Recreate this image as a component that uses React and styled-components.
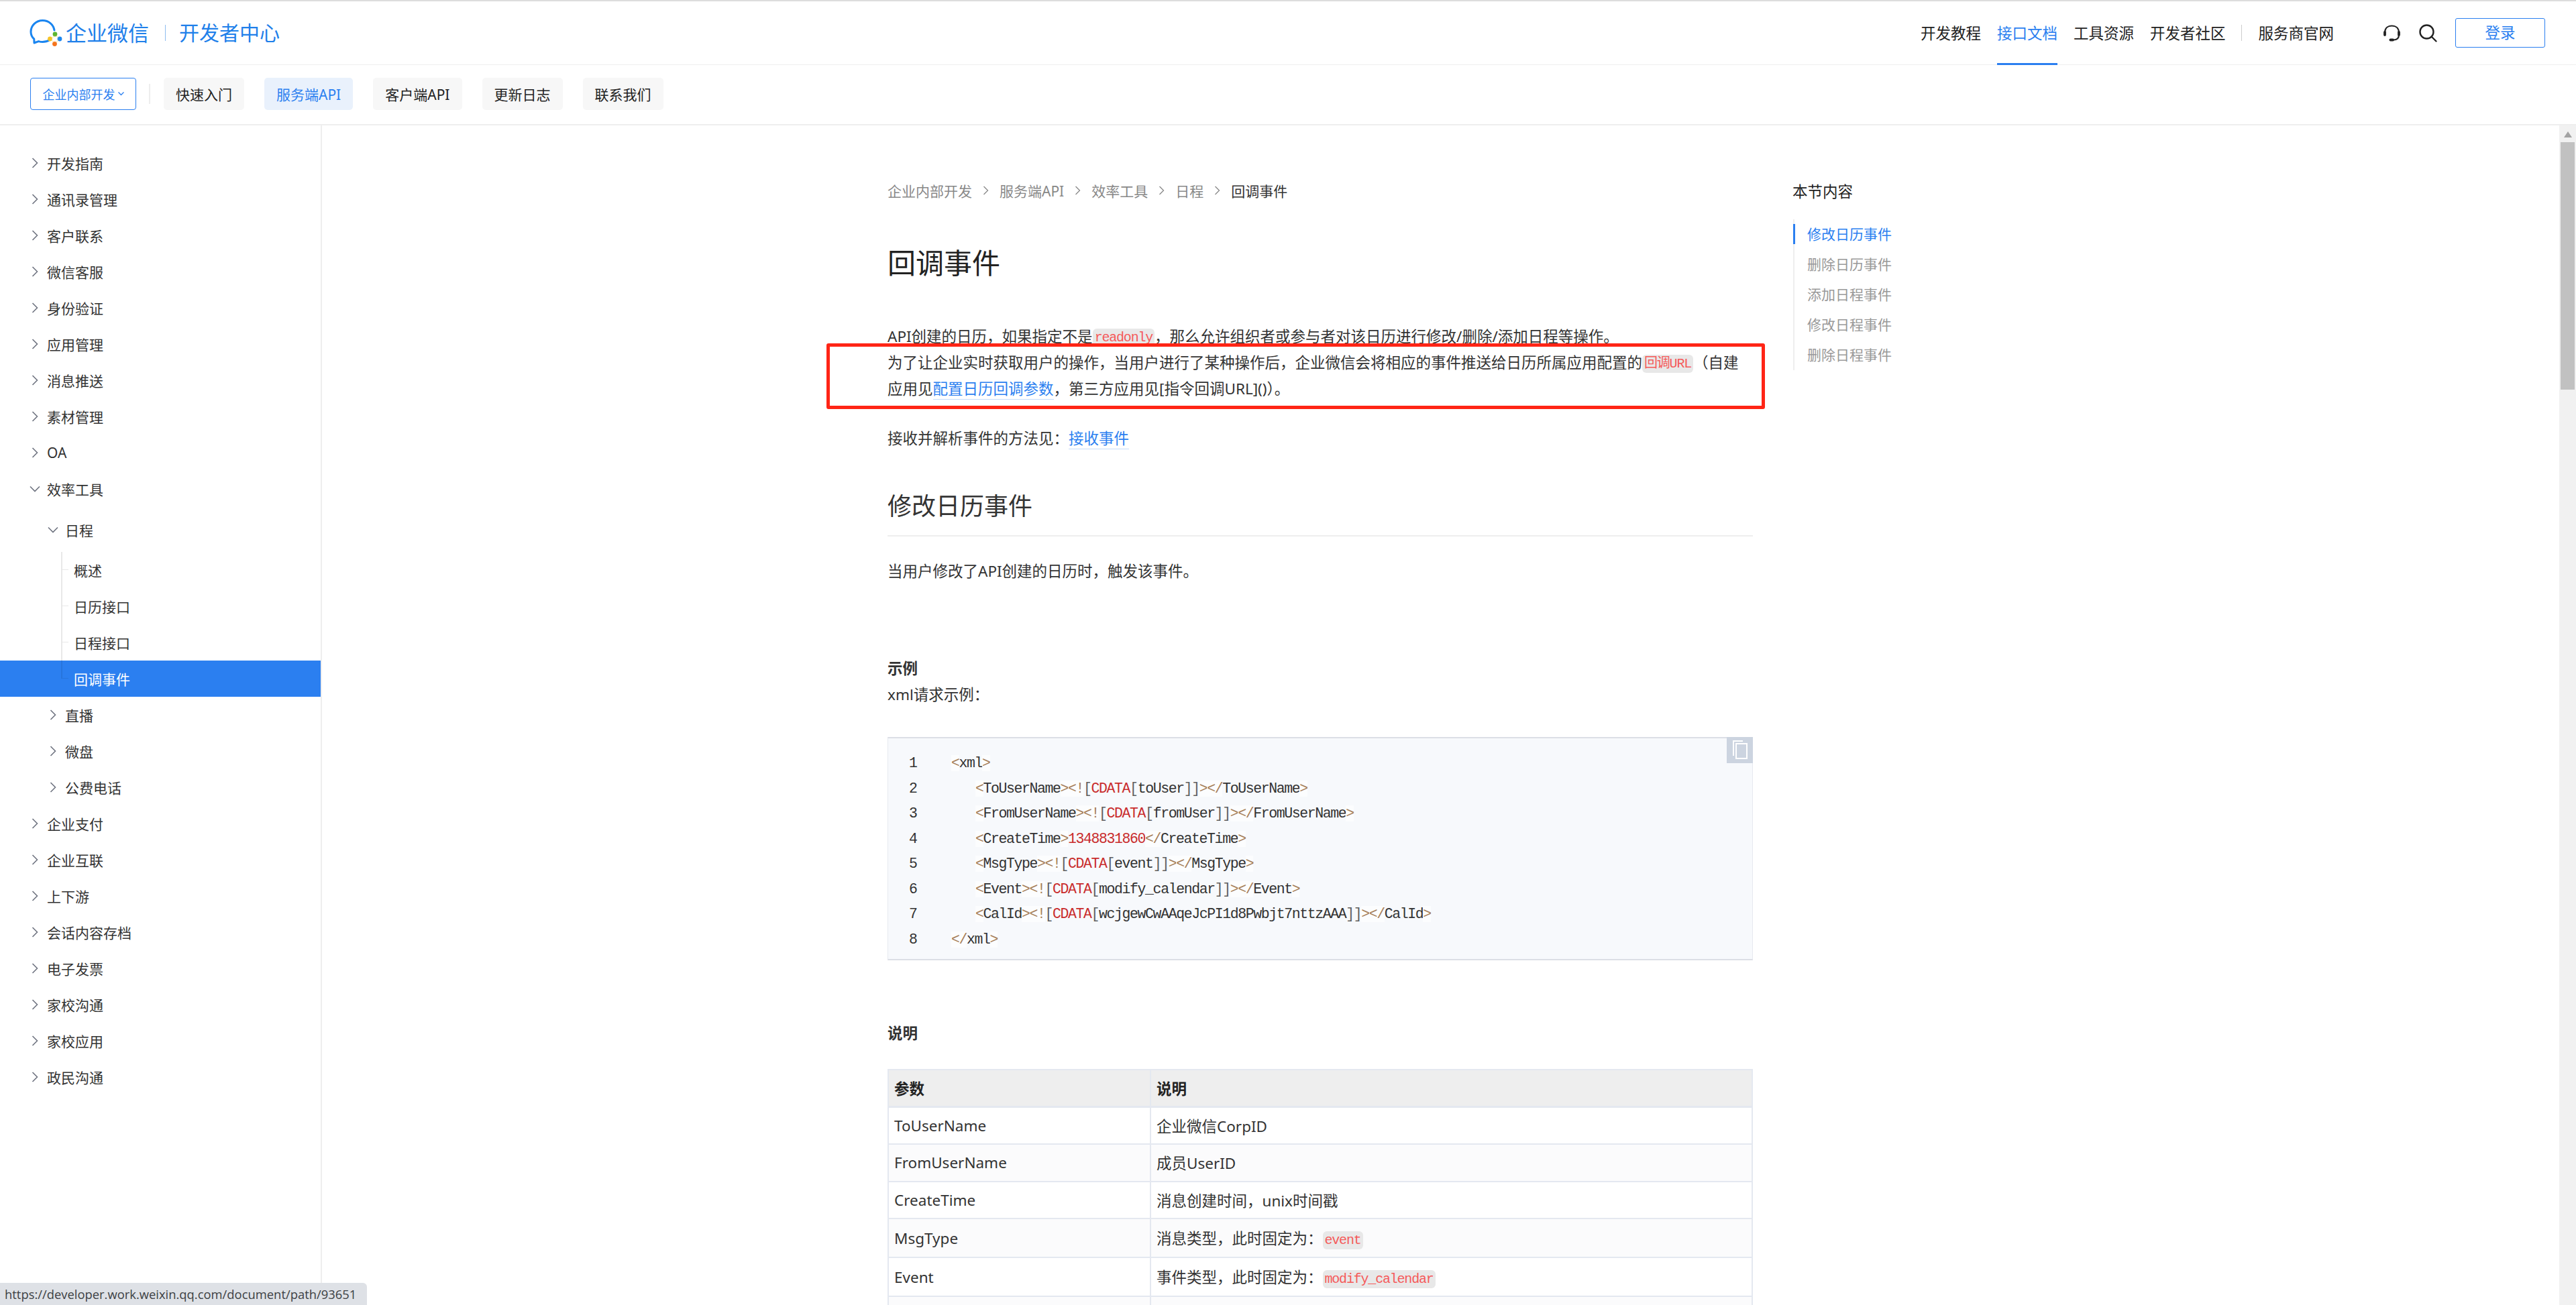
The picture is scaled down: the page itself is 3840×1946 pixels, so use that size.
import React from 'react';
import styled, { createGlobalStyle } from 'styled-components';

const BLUE = '#2b7ff0';
const LINE = '#eeeeee';
const SANS = '"Noto Sans", "Noto Sans CJK SC", sans-serif';
const MONO = '"Liberation Mono", "Noto Sans CJK SC", monospace';

const GlobalStyle = createGlobalStyle`
  html, body {
    margin: 0;
    padding: 0;
    height: 100%;
    overflow: hidden;
    background: #fff;
  }
  body {
    font-family: ${SANS};
    color: #333;
  }
  * {
    box-sizing: border-box;
  }
`;

const Page = styled.div`
  position: relative;
  display: flex;
  flex-direction: column;
  height: 100vh;
  overflow: hidden;
`;

const Header = styled.header`
  display: flex;
  align-items: center;
  justify-content: space-between;
  height: 97px;
  padding: 0 46px 0 44px;
  border-top: 2px solid #dddddd;
  border-bottom: 1px solid ${LINE};
  flex-shrink: 0;
`;

const Logo = styled.div`
  display: flex;
  align-items: center;
  color: #1f80ea;
`;

const LogoMark = styled.svg`
  width: 50px;
  height: 44px;
  margin-right: 4px;
  flex-shrink: 0;
`;

const LogoName = styled.span`
  font-size: 31px;
  line-height: 44px;
  white-space: nowrap;
`;

const LogoBar = styled.span`
  width: 1px;
  height: 24px;
  margin: 0 20px 0 24px;
  background: #8fbdf0;
`;

const LogoSub = styled.span`
  font-size: 30px;
  line-height: 44px;
  white-space: nowrap;
`;

const HeaderRight = styled.div`
  display: flex;
  align-items: center;
  height: 100%;
`;

const Nav = styled.nav`
  display: flex;
  align-items: center;
  gap: 24px;
  height: 100%;
  margin-right: 73px;
`;

const NavItem = styled.a`
  display: flex;
  align-items: center;
  height: 100%;
  font-size: 22.5px;
  white-space: nowrap;
  color: ${({ $active }) => ($active ? BLUE : '#222')};
  border-bottom: 3px solid ${({ $active }) => ($active ? BLUE : 'transparent')};
  margin-bottom: -1px;
`;

const NavBar = styled.span`
  width: 1px;
  height: 24px;
  background: #cccccc;
`;

const IconSlot = styled.svg`
  width: 27px;
  height: 27px;
  margin-right: 27px;
  color: #222;
  flex-shrink: 0;
`;

const Login = styled.button`
  width: 134px;
  height: 44px;
  margin-left: 0;
  border: 1.5px solid ${BLUE};
  border-radius: 3px;
  background: #fff;
  color: ${BLUE};
  font-family: ${SANS};
  font-size: 22.5px;
  line-height: 1;
`;

const SubBar = styled.div`
  display: flex;
  align-items: center;
  gap: 30px;
  height: 90px;
  padding: 0 45px 2px;
  border-bottom: 2px solid ${LINE};
  flex-shrink: 0;
`;

const Scope = styled.div`
  display: flex;
  align-items: center;
  justify-content: center;
  gap: 4px;
  width: 158px;
  height: 48px;
  border: 1.5px solid ${BLUE};
  border-radius: 4px;
  color: ${BLUE};
  font-size: 18px;
  white-space: nowrap;
`;

const SubDivider = styled.span`
  width: 2px;
  height: 30px;
  margin: 0 -10px 0 -11px;
  background: ${LINE};
`;

const Tab = styled.a`
  display: flex;
  align-items: center;
  height: 48px;
  padding: 0 18px;
  border-radius: 5px;
  font-size: 21px;
  white-space: nowrap;
  color: ${({ $active }) => ($active ? BLUE : '#222')};
  background: ${({ $active }) => ($active ? '#e9f1fc' : '#f7f7f7')};
`;

const Body = styled.div`
  display: flex;
  flex: 1;
  min-height: 0;
`;

const Sidebar = styled.aside`
  width: 480px;
  padding-top: 29px;
  border-right: 2px solid ${LINE};
  flex-shrink: 0;
`;

const Row = styled.div`
  display: flex;
  align-items: center;
  gap: 10px;
  height: 54px;
  padding-left: ${({ $level }) => ($level ? 71 : 44)}px;
  margin-bottom: ${({ $after }) => $after || 0}px;
  font-size: 21px;
  color: #333;
  white-space: nowrap;
`;

const ChevronBox = styled.svg`
  width: 16px;
  height: 16px;
  color: #6f7480;
  flex-shrink: 0;
`;

const Leaf = styled.div`
  position: relative;
  display: flex;
  align-items: center;
  height: 54px;
  padding-left: 110px;
  font-size: 21px;
  white-space: nowrap;
  color: ${({ $active }) => ($active ? '#fff' : '#333')};
  background: ${({ $active }) => ($active ? BLUE : 'transparent')};

  &::before {
    content: '';
    position: absolute;
    left: 91px;
    top: 0;
    width: 2px;
    height: ${({ $active }) => ($active ? '27px' : '100%')};
    background: ${({ $active }) => ($active ? 'rgba(0, 0, 0, 0.08)' : '#e8e8e8')};
  }

  &::after {
    content: '';
    position: absolute;
    left: 93px;
    top: 26px;
    width: 9px;
    height: 1px;
    background: ${({ $active }) => ($active ? 'rgba(0, 0, 0, 0.08)' : '#e8e8e8')};
  }
`;

const ActiveSlot = styled.div`
  width: 478px;
`;

const Main = styled.main`
  display: flex;
  flex: 1;
  min-width: 0;
  padding-left: 843px;
`;

const Doc = styled.article`
  position: relative;
  width: 1290px;
  padding-top: 82px;
  flex-shrink: 0;
`;

const Crumbs = styled.div`
  display: flex;
  align-items: center;
  gap: 16px;
  height: 30px;
  font-size: 21px;
  color: #888;
`;

const CrumbSep = styled.svg`
  width: 9px;
  height: 14px;
  color: #888;
`;

const CrumbNow = styled.span`
  color: #333;
`;

const Title = styled.h1`
  margin: 63px 0 0;
  font-size: 42px;
  font-weight: 400;
  line-height: 60px;
  color: #222;
`;

const Para = styled.p`
  margin: ${({ $top }) => $top}px 0 0;
  font-size: 22.5px;
  line-height: 39px;
  color: #333;
  white-space: nowrap;
`;

const Strong = styled.p`
  margin: ${({ $top }) => $top}px 0 0;
  font-size: 22.5px;
  font-weight: 700;
  line-height: 39px;
  color: #333;
`;

const Heading = styled.h2`
  margin: 55px 0 0;
  padding-bottom: 16px;
  border-bottom: 2px solid ${LINE};
  font-size: 36px;
  font-weight: 400;
  line-height: 54px;
  color: #333;
`;

const Link = styled.a`
  color: ${BLUE};
  border-bottom: 1px solid #c5dcfa;
`;

const Code = styled.code`
  display: inline-block;
  height: 27px;
  padding: 0 3px;
  border-radius: 6px;
  background: #e8e8e8;
  color: #f55a5a;
  font-family: ${MONO};
  font-size: 20px;
  letter-spacing: -1.2px;
  line-height: 27px;
  vertical-align: middle;
`;

const Annotation = styled.div`
  position: absolute;
  left: -91px;
  top: 325px;
  width: 1399px;
  height: 98px;
  border: 5px solid #ff2516;
  border-radius: 3px;
  pointer-events: none;
`;

const CodeBlock = styled.div`
  position: relative;
  margin-top: 43.5px;
  height: 333px;
  padding: 19px 0 13px;
  background: #f7f9fc;
  border: solid #e6e9f0;
  border-width: 2px 1px;
  border-top-color: #dcdfe6;
  border-bottom-color: #dcdfe6;
`;

const CopyButton = styled.div`
  position: absolute;
  top: -2px;
  right: -1px;
  display: flex;
  align-items: center;
  justify-content: center;
  width: 39px;
  height: 39px;
  background: #ccd4e0;
`;

const CopyIcon = styled.svg`
  width: 26px;
  height: 30px;
`;

const CodeLine = styled.div`
  display: flex;
  height: 37.5px;
  align-items: center;
  font-family: ${MONO};
  font-size: 21.5px;
  letter-spacing: -1.4px;
  white-space: pre;
`;

const LineNo = styled.span`
  width: ${({ $indent }) => ($indent ? 130 : 94)}px;
  padding-left: 31px;
  color: #333;
  flex-shrink: 0;
`;

const tokenColors = { p: '#a67f59', o: '#5f5f5f', k: '#c92c2c', n: '#333' };

const Token = styled.span`
  color: ${({ $kind }) => tokenColors[$kind]};
  background: ${({ $kind }) => ($kind === 'p' ? 'rgba(255, 255, 255, 0.6)' : 'transparent')};
`;

const Table = styled.table`
  width: 100%;
  margin-top: 33.5px;
  border-collapse: collapse;
  table-layout: fixed;
  font-size: 22.5px;
`;

const HeadCell = styled.th`
  height: 56px;
  padding: 0 8px;
  background: #eeeeee;
  border: 2px solid #e4e8f0;
  border-bottom-width: 3px;
  text-align: left;
  font-weight: 700;
  color: #222;
`;

const TableRow = styled.tr`
  background: ${({ $even }) => ($even ? '#fbfbfc' : '#fff')};
`;

const Cell = styled.td`
  height: ${({ $tall }) => ($tall ? 58 : 55.5)}px;
  padding: 0 8px;
  border: 2px solid #e4e8f0;
  color: #333;
  white-space: nowrap;
`;

const Toc = styled.aside`
  width: 240px;
  margin-left: 59px;
  padding-top: 84px;
  flex-shrink: 0;
`;

const TocTitle = styled.div`
  height: 30px;
  margin-bottom: 26px;
  font-size: 22.5px;
  line-height: 30px;
  color: #222;
`;

const TocList = styled.div`
  border-left: 2px solid ${LINE};
  margin-left: 1px;
  padding-bottom: 0;
`;

const TocItem = styled.div`
  position: relative;
  height: 45px;
  padding-left: 19px;
  font-size: 21px;
  line-height: 45px;
  white-space: nowrap;
  color: ${({ $active }) => ($active ? BLUE : '#999')};

  &::before {
    content: '';
    display: ${({ $active }) => ($active ? 'block' : 'none')};
    position: absolute;
    left: -2px;
    top: 7px;
    width: 3px;
    height: 30px;
    background: ${BLUE};
  }
`;

const ScrollTrack = styled.div`
  position: absolute;
  right: 0;
  top: 187px;
  bottom: 0;
  width: 25px;
  padding: 0 2px;
  background: #f1f1f1;
`;

const ScrollArrow = styled.div`
  width: 0;
  height: 0;
  margin: 9px auto 7px;
  border-left: 6px solid transparent;
  border-right: 6px solid transparent;
  border-bottom: 9px solid #a3a3a3;
`;

const ScrollThumb = styled.div`
  height: 369px;
  background: #c1c1c1;
`;

const StatusBar = styled.div`
  position: absolute;
  left: 0;
  bottom: 0;
  width: 547px;
  height: 33px;
  padding-left: 7px;
  border-top-right-radius: 6px;
  background: #dee1e6;
  color: #3c4043;
  font-family: "Open Sans", sans-serif;
  font-size: 18.4px;
  line-height: 33px;
  white-space: nowrap;
`;

const Chevron = ({ open }) => (
  <ChevronBox viewBox="0 0 16 16" fill="none" stroke="currentColor" strokeWidth="1.6">
    {open ? <path d="M1 4.5 L8 11.5 L15 4.5" /> : <path d="M4.5 1 L11.5 8 L4.5 15" />}
  </ChevronBox>
);

const NavRow = ({ label, open, level, after }) => (
  <Row $level={level} $after={after}>
    <Chevron open={open} />
    {label}
  </Row>
);

const topBefore = ['开发指南', '通讯录管理', '客户联系', '微信客服', '身份验证', '应用管理', '消息推送', '素材管理', 'OA'];
const topAfter = ['企业支付', '企业互联', '上下游', '会话内容存档', '电子发票', '家校沟通', '家校应用', '政民沟通'];
const tabs = ['快速入门', '服务端API', '客户端API', '更新日志', '联系我们'];
const crumbs = ['企业内部开发', '服务端API', '效率工具', '日程'];
const tocItems = ['修改日历事件', '删除日历事件', '添加日程事件', '修改日程事件', '删除日程事件'];

const cdataLine = (tag, value) => [
  ['p', '<'], ['n', tag], ['p', '>'], ['p', '<!'], ['o', '['], ['k', 'CDATA'], ['o', '['], ['n', value], ['o', ']]'],
  ['p', '>'], ['p', '</'], ['n', tag], ['p', '>'],
];

const codeLines = [
  { tokens: [['p', '<'], ['n', 'xml'], ['p', '>']] },
  { indent: true, tokens: cdataLine('ToUserName', 'toUser') },
  { indent: true, tokens: cdataLine('FromUserName', 'fromUser') },
  {
    indent: true,
    tokens: [['p', '<'], ['n', 'CreateTime'], ['p', '>'], ['k', '1348831860'], ['p', '</'], ['n', 'CreateTime'], ['p', '>']],
  },
  { indent: true, tokens: cdataLine('MsgType', 'event') },
  { indent: true, tokens: cdataLine('Event', 'modify_calendar') },
  { indent: true, tokens: cdataLine('CalId', 'wcjgewCwAAqeJcPI1d8Pwbjt7nttzAAA') },
  { tokens: [['p', '</'], ['n', 'xml'], ['p', '>']] },
];

const tableRows = [
  { name: 'ToUserName', desc: '企业微信CorpID' },
  { name: 'FromUserName', desc: '成员UserID' },
  { name: 'CreateTime', desc: '消息创建时间，unix时间戳' },
  { name: 'MsgType', desc: '消息类型，此时固定为：', code: 'event' },
  { name: 'Event', desc: '事件类型，此时固定为：', code: 'modify_calendar' },
  { name: '', desc: '' },
];

export default function App() {
  return (
    <Page>
      <GlobalStyle />
      <Header>
        <Logo>
          <LogoMark viewBox="0 0 50 44" fill="none">
            <path
              d="M30 32.5 C27 34.5 23.5 35.5 19.5 35.5 C17.5 35.5 15.5 35.2 13.5 34.6 L7 37 L6.8 31.2 C3.4 28 2 24.5 2 20.5 C2 11 10 3.5 19.5 3.5 C28.5 3.5 35.6 9.5 37 18"
              stroke="#1a85f0"
              strokeWidth="3"
              strokeLinecap="round"
              strokeLinejoin="round"
            />
            <circle cx="38" cy="24" r="3.4" fill="#5cb531" />
            <circle cx="30.5" cy="31" r="3.4" fill="#f7c325" />
            <circle cx="37.5" cy="38.5" r="3.4" fill="#f5731c" />
            <circle cx="45" cy="31" r="3.4" fill="#1a85f0" />
            <path d="M38 26 L32 31 M32 32 L37 37 M39 37 L44 32 M44 30 L39 26" stroke="#f2c94c" strokeWidth="1" opacity="0.5" />
          </LogoMark>
          <LogoName>企业微信</LogoName>
          <LogoBar />
          <LogoSub>开发者中心</LogoSub>
        </Logo>
        <HeaderRight>
          <Nav>
            <NavItem>开发教程</NavItem>
            <NavItem $active>接口文档</NavItem>
            <NavItem>工具资源</NavItem>
            <NavItem>开发者社区</NavItem>
            <NavBar />
            <NavItem>服务商官网</NavItem>
          </Nav>
          <IconSlot viewBox="0 0 27 27" fill="none" stroke="currentColor" strokeWidth="2.2" strokeLinecap="round">
            <path d="M3 13 C3 6 7.5 2.5 13.5 2.5 C19.5 2.5 24 6 24 13" />
            <path d="M3 12 V16 M24 12 V16" strokeWidth="3.8" />
            <path d="M24 16 C24 20.5 21.5 23.5 16 23.5" />
            <path d="M11.5 23.5 H15" strokeWidth="4" />
          </IconSlot>
          <IconSlot viewBox="0 0 27 27" fill="none" stroke="currentColor" strokeWidth="2.4" strokeLinecap="round">
            <circle cx="11.5" cy="11.5" r="10" />
            <path d="M18.5 18.5 L25.5 25.5" />
          </IconSlot>
          <Login>登录</Login>
        </HeaderRight>
      </Header>
      <SubBar>
        <Scope>
          企业内部开发
          <svg width="9" height="6" viewBox="0 0 9 6" fill="none" stroke="currentColor" strokeWidth="1.3">
            <path d="M0.5 0.5 L4.5 4.5 L8.5 0.5" />
          </svg>
        </Scope>
        <SubDivider />
        {tabs.map((tab) => (
          <Tab key={tab} $active={tab === '服务端API'}>{tab}</Tab>
        ))}
      </SubBar>
      <Body>
        <Sidebar>
          {topBefore.map((label) => (
            <NavRow key={label} label={label} />
          ))}
          <NavRow label="效率工具" open after={7} />
          <NavRow label="日程" open level={1} after={6} />
          <Leaf>概述</Leaf>
          <Leaf>日历接口</Leaf>
          <Leaf>日程接口</Leaf>
          <ActiveSlot>
            <Leaf $active>回调事件</Leaf>
          </ActiveSlot>
          <NavRow label="直播" level={1} />
          <NavRow label="微盘" level={1} />
          <NavRow label="公费电话" level={1} />
          {topAfter.map((label) => (
            <NavRow key={label} label={label} />
          ))}
        </Sidebar>
        <Main>
          <Doc>
            <Crumbs>
              {crumbs.map((crumb) => (
                <React.Fragment key={crumb}>
                  <span>{crumb}</span>
                  <CrumbSep viewBox="0 0 9 14" fill="none" stroke="currentColor" strokeWidth="1.3">
                    <path d="M1.5 1 L7.5 7 L1.5 13" />
                  </CrumbSep>
                </React.Fragment>
              ))}
              <CrumbNow>回调事件</CrumbNow>
            </Crumbs>
            <Title>回调事件</Title>
            <Para $top={60}>
              API创建的日历，如果指定不是<Code>readonly</Code>，那么允许组织者或参与者对该日历进行修改/删除/添加日程等操作。
              <br />
              为了让企业实时获取用户的操作，当用户进行了某种操作后，企业微信会将相应的事件推送给日历所属应用配置的<Code>回调URL</Code>（自建
              <br />
              应用见<Link>配置日历回调参数</Link>，第三方应用见[指令回调URL]()）。
            </Para>
            <Annotation />
            <Para $top={35}>
              接收并解析事件的方法见：<Link>接收事件</Link>
            </Para>
            <Heading>修改日历事件</Heading>
            <Para $top={32}>当用户修改了API创建的日历时，触发该事件。</Para>
            <Strong $top={106}>示例</Strong>
            <Para $top={0}>xml请求示例：</Para>
            <CodeBlock>
              <CopyButton>
                <CopyIcon viewBox="0 0 26 30" fill="none" stroke="#fff" strokeWidth="2">
                  <path d="M17 2 H3 V24" />
                  <rect x="7" y="6" width="16" height="22" />
                </CopyIcon>
              </CopyButton>
              {codeLines.map((line, index) => (
                <CodeLine key={index}>
                  <LineNo $indent={line.indent}>{index + 1}</LineNo>
                  <span>
                    {line.tokens.map(([kind, text], i) => (
                      <Token key={i} $kind={kind}>{text}</Token>
                    ))}
                  </span>
                </CodeLine>
              ))}
            </CodeBlock>
            <Strong $top={89.5}>说明</Strong>
            <Table>
              <colgroup>
                <col width="391" />
                <col />
              </colgroup>
              <thead>
                <tr>
                  <HeadCell>参数</HeadCell>
                  <HeadCell>说明</HeadCell>
                </tr>
              </thead>
              <tbody>
                {tableRows.map((row, index) => (
                  <TableRow key={index} $even={index % 2 === 1}>
                    <Cell $tall={!!row.code}>{row.name}</Cell>
                    <Cell $tall={!!row.code}>
                      {row.desc}
                      {row.code && <Code>{row.code}</Code>}
                    </Cell>
                  </TableRow>
                ))}
              </tbody>
            </Table>
          </Doc>
          <Toc>
            <TocTitle>本节内容</TocTitle>
            <TocList>
              {tocItems.map((item, index) => (
                <TocItem key={item} $active={index === 0}>{item}</TocItem>
              ))}
            </TocList>
          </Toc>
        </Main>
      </Body>
      <ScrollTrack>
        <ScrollArrow />
        <ScrollThumb />
      </ScrollTrack>
      <StatusBar>https://developer.work.weixin.qq.com/document/path/93651</StatusBar>
    </Page>
  );
}
